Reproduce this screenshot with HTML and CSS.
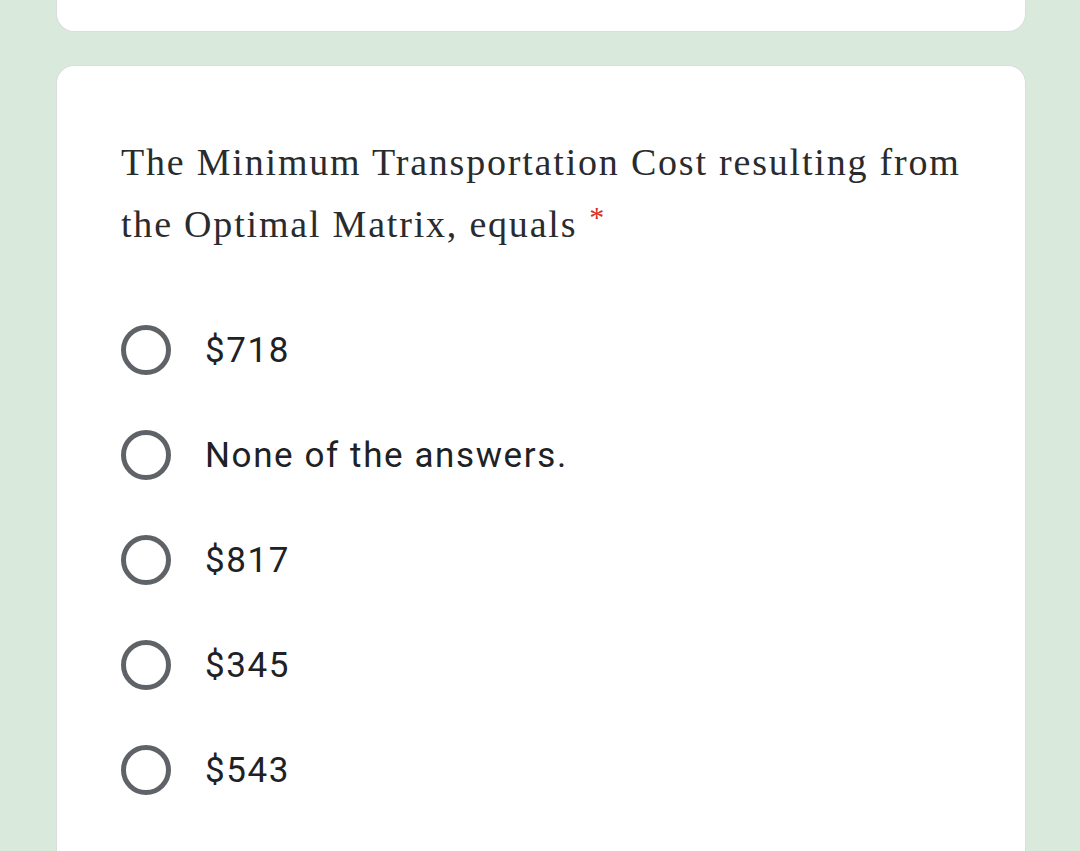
FILE: index.html
```html
<!DOCTYPE html>
<html>
<head>
<meta charset="utf-8">
<link rel="stylesheet" href="styles.css">
</head>
<body>
<div class="page">
  <div class="card card-top"></div>
  <div class="card card-main">
    <div class="question">The Minimum Transportation Cost resulting from the Optimal Matrix, equals<span class="req">*</span></div>
    <div class="options">
      <div class="option"><span class="radio"></span><span class="label">$718</span></div>
      <div class="option"><span class="radio"></span><span class="label">None of the answers.</span></div>
      <div class="option"><span class="radio"></span><span class="label">$817</span></div>
      <div class="option"><span class="radio"></span><span class="label">$345</span></div>
      <div class="option"><span class="radio"></span><span class="label">$543</span></div>
    </div>
  </div>
</div>
</body>
</html>
```

FILE: styles.css
```css
html, body {
  margin: 0;
  padding: 0;
  background: #d9e9dc;
  height: 851px;
  overflow: hidden;
}
.page {
  padding: 0 54px 0 56px;
  display: flex;
  flex-direction: column;
  gap: 33px;
}
.card {
  background: #ffffff;
  border: 1px solid #dadce0;
  box-sizing: border-box;
}
.card-top {
  height: 32px;
  border-top: none;
  border-radius: 0 0 18px 18px;
}
.card-main {
  border-radius: 18px 18px 0 0;
  border-bottom: none;
  padding: 65px 40px 100px 64px;
  height: 800px;
}
.question {
  font-family: "Liberation Serif", serif;
  font-size: 38px;
  line-height: 62px;
  color: #2a2b2d;
  letter-spacing: 1.8px;
  max-width: 850px;
}
.req {
  display: inline-block;
  color: #d93025;
  font-family: "Liberation Serif", serif;
  font-size: 30px;
  line-height: 24px;
  vertical-align: 10px;
  margin-left: 12px;
  letter-spacing: 0;
}
.options {
  margin-top: 70px;
  display: flex;
  flex-direction: column;
  gap: 55px;
}
.option {
  display: flex;
  align-items: center;
  height: 50px;
}
.radio {
  width: 50px;
  height: 50px;
  box-sizing: border-box;
  border: 5px solid #5f6368;
  border-radius: 50%;
  flex: none;
}
.label {
  margin-left: 34px;
  font-family: Roboto, sans-serif;
  font-size: 35px;
  color: #202124;
  letter-spacing: 1.6px;
}
```
